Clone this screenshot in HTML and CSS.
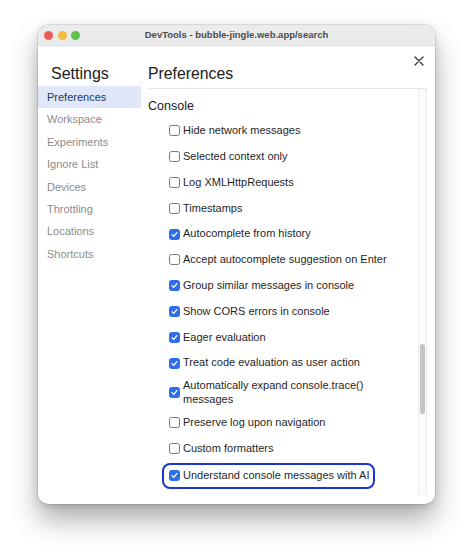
FILE: index.html
```html
<!DOCTYPE html>
<html>
<head>
<meta charset="utf-8">
<link rel="stylesheet" href="styles.css">
</head>
<body>
<div class="window">
  <div class="titlebar">
    <div class="lights">
      <span class="light red"></span>
      <span class="light yellow"></span>
      <span class="light green"></span>
    </div>
    <div class="title">DevTools - bubble-jingle.web.app/search</div>
  </div>
  <div class="body">
    <aside class="sidebar">
      <div class="side-title">Settings</div>
      <ul class="nav">
        <li class="nav-item active">Preferences</li>
        <li class="nav-item">Workspace</li>
        <li class="nav-item">Experiments</li>
        <li class="nav-item">Ignore List</li>
        <li class="nav-item">Devices</li>
        <li class="nav-item">Throttling</li>
        <li class="nav-item">Locations</li>
        <li class="nav-item">Shortcuts</li>
      </ul>
    </aside>
    <main class="main">
      <div class="main-head">
        <div class="main-title">Preferences</div>
        <svg class="close" width="10" height="10" viewBox="0 0 10 10"><path d="M1 1L9 9M9 1L1 9" stroke="#333" stroke-width="1.3" stroke-linecap="round"/></svg>
      </div>
      <div class="scroller">
        <div class="content">
          <div class="section-title">Console</div>
          <div class="rows">
            <label class="row"><span class="box"></span><span class="lbl">Hide network messages</span></label>
            <label class="row"><span class="box"></span><span class="lbl">Selected context only</span></label>
            <label class="row"><span class="box"></span><span class="lbl">Log XMLHttpRequests</span></label>
            <label class="row"><span class="box"></span><span class="lbl">Timestamps</span></label>
            <label class="row"><span class="box on"><svg viewBox="0 0 11 11"><path d="M2.6 5.8L4.6 7.8L8.4 3.2" fill="none" stroke="#fff" stroke-width="1.6" stroke-linecap="round" stroke-linejoin="round"/></svg></span><span class="lbl">Autocomplete from history</span></label>
            <label class="row"><span class="box"></span><span class="lbl">Accept autocomplete suggestion on Enter</span></label>
            <label class="row"><span class="box on"><svg viewBox="0 0 11 11"><path d="M2.6 5.8L4.6 7.8L8.4 3.2" fill="none" stroke="#fff" stroke-width="1.6" stroke-linecap="round" stroke-linejoin="round"/></svg></span><span class="lbl">Group similar messages in console</span></label>
            <label class="row"><span class="box on"><svg viewBox="0 0 11 11"><path d="M2.6 5.8L4.6 7.8L8.4 3.2" fill="none" stroke="#fff" stroke-width="1.6" stroke-linecap="round" stroke-linejoin="round"/></svg></span><span class="lbl">Show CORS errors in console</span></label>
            <label class="row"><span class="box on"><svg viewBox="0 0 11 11"><path d="M2.6 5.8L4.6 7.8L8.4 3.2" fill="none" stroke="#fff" stroke-width="1.6" stroke-linecap="round" stroke-linejoin="round"/></svg></span><span class="lbl">Eager evaluation</span></label>
            <label class="row"><span class="box on"><svg viewBox="0 0 11 11"><path d="M2.6 5.8L4.6 7.8L8.4 3.2" fill="none" stroke="#fff" stroke-width="1.6" stroke-linecap="round" stroke-linejoin="round"/></svg></span><span class="lbl">Treat code evaluation as user action</span></label>
            <label class="row two"><span class="box on"><svg viewBox="0 0 11 11"><path d="M2.6 5.8L4.6 7.8L8.4 3.2" fill="none" stroke="#fff" stroke-width="1.6" stroke-linecap="round" stroke-linejoin="round"/></svg></span><span class="lbl">Automatically expand console.trace()<br>messages</span></label>
            <label class="row"><span class="box"></span><span class="lbl">Preserve log upon navigation</span></label>
            <label class="row"><span class="box"></span><span class="lbl">Custom formatters</span></label>
            <label class="row highlight"><span class="box on"><svg viewBox="0 0 11 11"><path d="M2.6 5.8L4.6 7.8L8.4 3.2" fill="none" stroke="#fff" stroke-width="1.6" stroke-linecap="round" stroke-linejoin="round"/></svg></span><span class="lbl">Understand console messages with AI</span></label>
          </div>
        </div>
        <div class="track"><div class="thumb"></div></div>
      </div>
    </main>
  </div>
</div>
</body>
</html>
```

FILE: styles.css
```css
* { box-sizing: border-box; }
html, body { margin: 0; padding: 0; background: #fff; }
body {
  width: 474px;
  height: 556px;
  overflow: hidden;
  font-family: "Liberation Sans", Arial, sans-serif;
  padding: 25px 0 0 38px;
}
.window {
  width: 397px;
  height: 479px;
  border-radius: 10px;
  background: #fff;
  overflow: hidden;
  box-shadow: 0 0 0 0.5px rgba(0,0,0,0.18), 0 16px 28px rgba(0,0,0,0.32), 0 2px 8px rgba(0,0,0,0.12);
  display: flex;
  flex-direction: column;
}
.titlebar {
  height: 21px;
  background: #ebebeb;
  border-bottom: 1px solid #dcdcdc;
  display: flex;
  align-items: center;
  position: relative;
  flex-shrink: 0;
}
.lights { display: flex; gap: 4.5px; padding-left: 6px; }
.light { width: 9px; height: 9px; border-radius: 50%; display: block; }
.red { background: #ee5b57; }
.yellow { background: #f5bb3f; }
.green { background: #5dc24c; }
.title {
  position: absolute;
  left: 0; right: 0; top: 0; bottom: 0;
  text-align: center;
  font-size: 9.5px;
  font-weight: bold;
  line-height: 20px;
  color: #4d4d4d;
}
.body { display: flex; flex: 1; min-height: 0; }
.sidebar { width: 103px; flex-shrink: 0; }
.side-title {
  height: 40px;
  font-size: 16px;
  color: #202020;
  padding: 18px 0 0 13px;
  line-height: 20px;
}
.nav { list-style: none; margin: 0; padding: 0; }
.nav-item {
  height: 22.4px;
  line-height: 22.4px;
  font-size: 11px;
  color: #8c8c8c;
  padding-left: 9px;
}
.nav-item.active {
  background: #dfe7f8;
  color: #1d3767;
}
.main { flex: 1; display: flex; flex-direction: column; padding-left: 7px; min-width: 0; }
.main-head {
  height: 43px;
  display: flex;
  justify-content: space-between;
  flex-shrink: 0;
  border-bottom: 1px solid #e6e6e6;
  margin-right: 8px;
}
.main-title {
  font-size: 15.8px;
  color: #202020;
  padding-top: 18px;
  line-height: 20px;
}
.close { margin-top: 10px; margin-right: 3px; }
.scroller {
  flex: 1;
  display: flex;
  min-height: 0;
  margin-right: 8px;
  margin-bottom: 9px;
}
.content { flex: 1; min-width: 0; }
.section-title {
  font-size: 12.5px;
  color: #202020;
  line-height: 16px;
  margin-top: 9px;
}
.rows { padding-left: 21px; margin-top: 4px; }
.row {
  display: flex;
  align-items: center;
  gap: 3px;
  min-height: 25.8px;
  font-size: 11px;
  color: #1f1f1f;
  line-height: 13.5px;
  white-space: nowrap;
}
.row.two { min-height: 34px; }
.box {
  width: 11px;
  height: 11px;
  border: 1px solid #7a7a7a;
  border-radius: 2.5px;
  background: #fff;
  flex-shrink: 0;
  display: block;
}
.box.on { background: #2f6ee6; border-color: #2f6ee6; }
.box svg { display: block; width: 9px; height: 9px; }
.highlight {
  display: inline-flex;
  margin-left: -7px;
  padding-left: 5px;
  padding-right: 3px;
  border: 2.5px solid #1a36d8;
  border-radius: 8px;
  min-height: 26px;
  margin-top: 1px;
}
.track {
  width: 9px;
  flex-shrink: 0;
  border-left: 1px solid #ececec;
  border-right: 1px solid #ececec;
  background: #fafafa;
  padding-top: 255px;
}
.thumb {
  width: 5px;
  height: 70px;
  margin-left: 1px;
  border-radius: 3px;
  background: #c4c4c4;
}
```
